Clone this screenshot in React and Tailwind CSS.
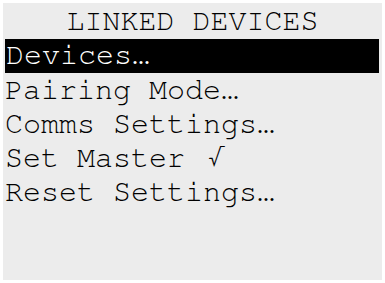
export default function App() {
  const items = ["Pairing Mode…", "Comms Settings…", "Set Master √", "Reset Settings…"];
  return (
    <div className="w-[385px] h-[283px] bg-white p-[3px] font-['FreeMono','Liberation_Mono',monospace]">
      <div className="w-[379px] h-[277px] bg-[#ececec] pt-[1px] text-[30px] text-black">
        <div className="h-[35px] leading-[34px] text-center whitespace-pre">LINKED DEVICES</div>
        <div className="ml-[2px] w-[374px] h-[34px] leading-[32px] bg-black text-white pl-[1px] whitespace-pre">Devices…</div>
        {items.map((t) => (
          <div key={t} className="h-[34px] leading-[34px] pl-[2px] whitespace-pre">{t}</div>
        ))}
      </div>
    </div>
  );
}
